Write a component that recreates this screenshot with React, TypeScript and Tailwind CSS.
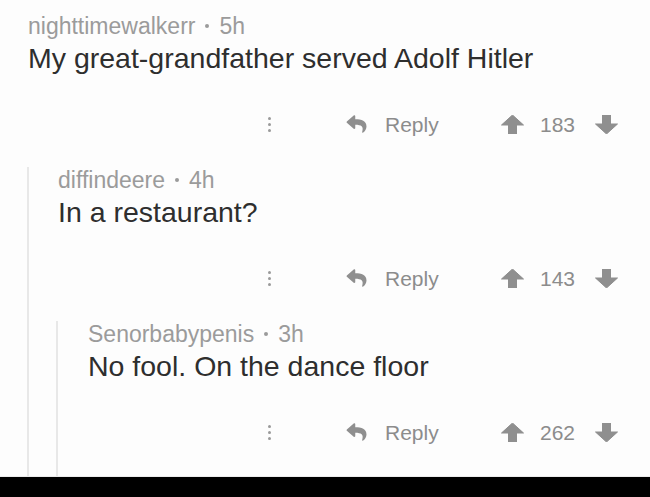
import { FaReply } from "react-icons/fa";

function Arrow({ down, className }: { down?: boolean; className?: string }) {
  return (
    <svg viewBox="0 0 23 19" className={className} fill="currentColor">
      <path
        d={down ? "M11.5 19 L0.5 9 L7.5 9 L7.5 0 L15.5 0 L15.5 9 L22.5 9 Z" : "M11.5 0 L22.5 10 L15.5 10 L15.5 19 L7.5 19 L7.5 10 L0.5 10 Z"}
        strokeLinejoin="round"
        stroke="currentColor"
        strokeWidth="1"
      />
    </svg>
  );
}

function Actions({ score }: { score: number }) {
  return (
    <div className="flex h-[30px] items-center justify-end pr-[32px] text-[#8c8c8c]">
      <div className="flex w-[5px] flex-col items-center gap-[3px]">
        <span className="h-[3px] w-[3px] rounded-full bg-[#9a9a9a]" />
        <span className="h-[3px] w-[3px] rounded-full bg-[#9a9a9a]" />
        <span className="h-[3px] w-[3px] rounded-full bg-[#9a9a9a]" />
      </div>
      <FaReply className="ml-[72px] h-[20px] w-[25px] text-[#8f8f8f]" />
      <span className="ml-[16px] w-[54px] text-[21px] leading-none">Reply</span>
      <Arrow className="ml-[62px] h-[19px] w-[23px] text-[#8f8f8f]" />
      <span className="ml-[16px] w-[39px] text-[21px] leading-none">{score}</span>
      <Arrow down className="ml-[16px] h-[19px] w-[23px] text-[#8f8f8f]" />
    </div>
  );
}

function Comment({ user, age, body, score }: { user: string; age: string; body: string; score: number }) {
  return (
    <div>
      <div className="flex items-center text-[23px] leading-[26px] text-[#9b9b9b]">
        <span>{user}</span>
        <span className="mx-[10px] h-[4px] w-[4px] rounded-full bg-[#9b9b9b]" />
        <span>{age}</span>
      </div>
      <div className="mt-[2px] text-[28.5px] leading-[34px] text-[#2e2e2e]">{body}</div>
      <div className="mt-[34px]">
        <Actions score={score} />
      </div>
    </div>
  );
}

export default function App() {
  return (
    <div className="flex h-[497px] w-[650px] flex-col bg-[#fdfdfd] font-['Liberation_Sans',Arial,sans-serif]">
      <div className="flex flex-1 flex-col border-b border-[#ececec] pt-[13px]">
        <div className="pl-[28px]">
          <Comment user="nighttimewalkerr" age="5h" body="My great-grandfather served Adolf Hitler" score={183} />
        </div>
        <div className="mt-[28px] ml-[27px] flex flex-1 flex-col border-l-2 border-[#e8e8e8] pl-[29px]">
          <Comment user="diffindeere" age="4h" body="In a restaurant?" score={143} />
          <div className="mt-[28px] -ml-[2px] flex flex-1 flex-col border-l-2 border-[#e8e8e8] pl-[30px]">
            <Comment user="Senorbabypenis" age="3h" body="No fool. On the dance floor" score={262} />
          </div>
        </div>
      </div>
      <div className="h-[20px] bg-black" />
    </div>
  );
}
